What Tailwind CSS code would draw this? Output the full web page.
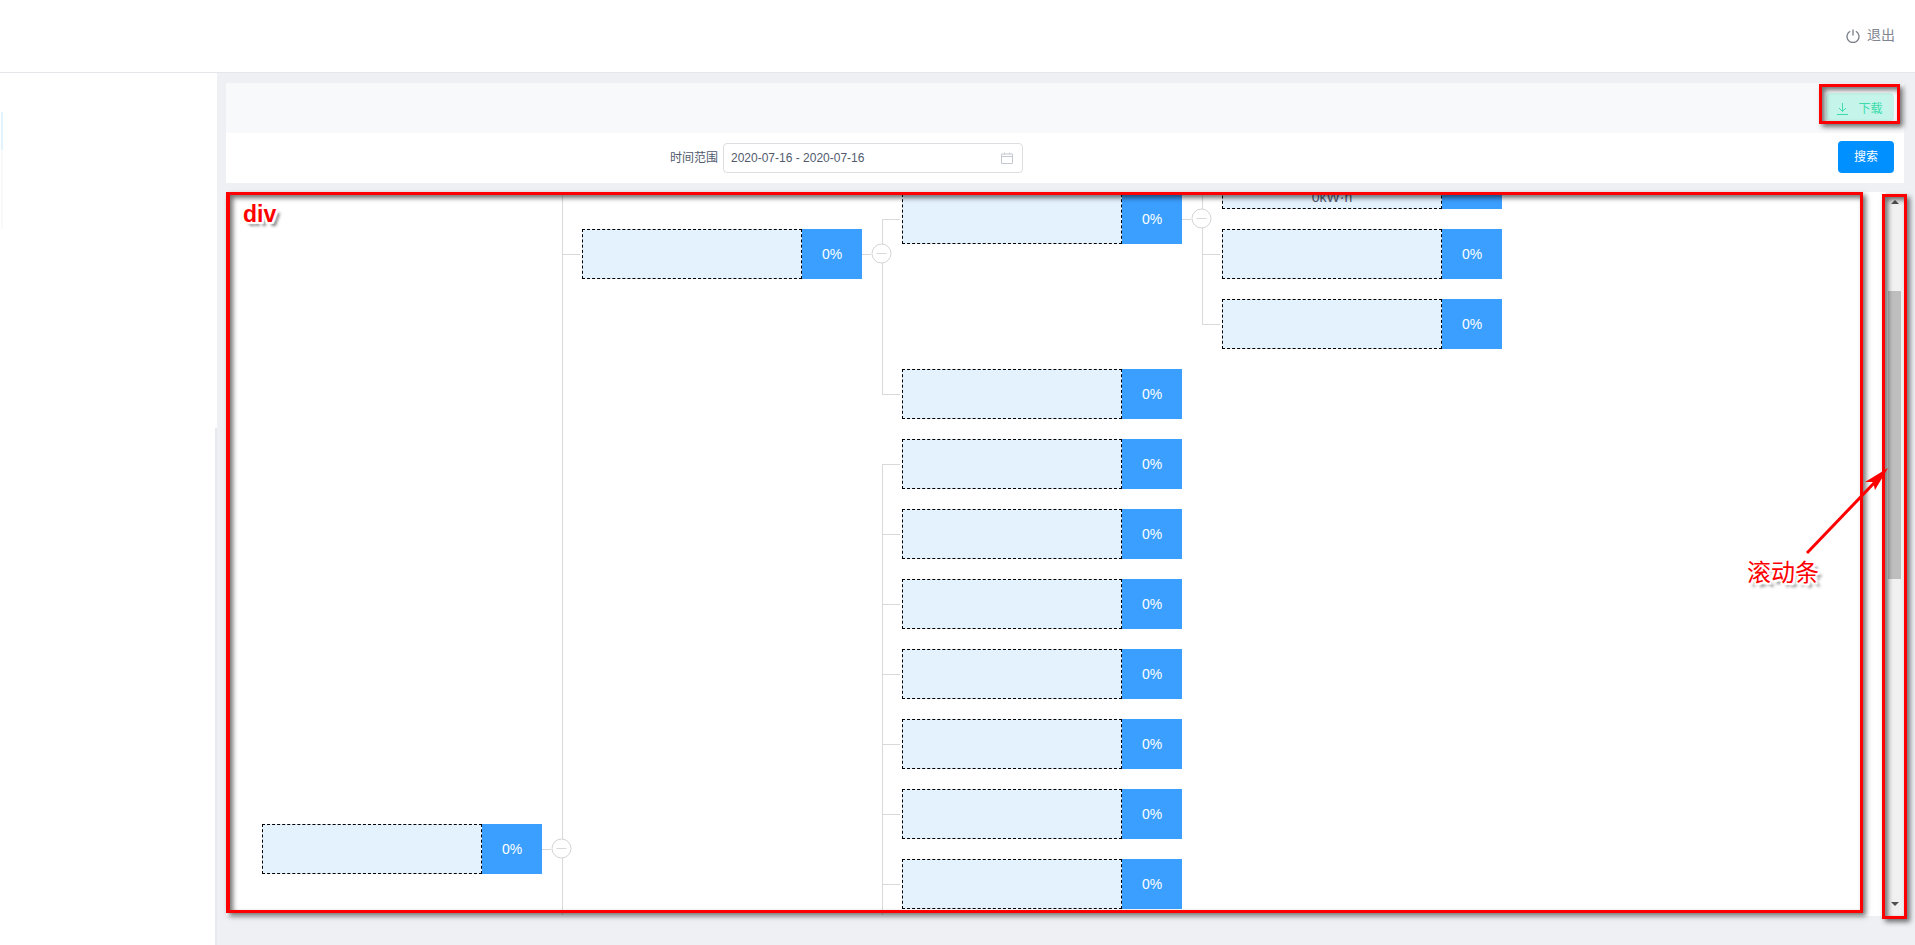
<!DOCTYPE html>
<html lang="zh-CN">

<head>
    <meta charset="UTF-8">
    <title>Report</title>
    <script src="https://cdn.jsdelivr.net/npm/@tailwindcss/browser@4"></script>
</head>

<body class="relative h-[945px] overflow-hidden bg-[#eef0f4] font-['Liberation_Sans','Noto_Sans_CJK_SC',sans-serif]">
    <!-- top bar -->
    <header class="h-[73px] bg-white border-b border-[#e4e6ea] flex items-center justify-end pr-[20px] pb-[1px]">
        <svg class="w-[14px] h-[14px] mr-[7px]" viewBox="0 0 14 14" fill="none" stroke="#777c85" stroke-width="1.3">
            <path d="M4.2 2.2a6 6 0 1 0 5.6 0" />
            <path d="M7 .5v6" />
        </svg>
        <span class="text-[14px] text-[#808691]">退出</span>
    </header>

    <div class="flex h-[872px]">
        <!-- sidebar -->
        <aside class="w-[217px] bg-[#e6e9ef] flex flex-col">
            <div class="h-[355px] bg-white pt-[39px] pl-[1px]">
                <div class="w-[2px] h-[38px] bg-[#e3f3fd]"></div>
                <div class="w-[2px] h-[79px] bg-[#f8f9fb]"></div>
            </div>
            <div class="flex-1 w-[215px] bg-white"></div>
        </aside>

        <!-- main -->
        <main class="flex-1 pl-[9px] pr-[11px] pt-[10px]">
            <div class="h-[50px] bg-[#f8f9fb] flex items-start justify-end pr-[10px] pt-[10px]">
                <button class="w-[68px] h-[28px] pt-[3px] rounded bg-[#c5f5ea] text-[#3ddcaa] text-[12px] flex items-center justify-center gap-[10px]">
                    <svg class="w-[11px] h-[12px]" viewBox="0 0 11 12" fill="none" stroke="#3ddcaa" stroke-width="1">
                        <path d="M5.5 0v8M2 5l3.5 3.5L9 5M0 11.5h11" />
                    </svg>
                    下载
                </button>
            </div>
            <div class="h-[50px] bg-white flex items-center pl-[444px] pr-[10px]">
                <span class="text-[12px] text-[#515a6e] w-[53px]">时间范围</span>
                <div class="w-[300px] h-[30px] border border-[#dcdee2] rounded flex items-center justify-between pl-[7px] pr-[9px]">
                    <span class="text-[12px] text-[#515a6e]">2020-07-16 - 2020-07-16</span>
                    <svg class="w-[12px] h-[12px]" viewBox="0 0 12 12" fill="none" stroke="#c5c8ce" stroke-width="1">
                        <path d="M.5 2h11v9.5H.5zM.5 4.5h11M3.5 .5v2M8.5 .5v2" />
                    </svg>
                </div>
                <button class="ml-auto mb-[2px] w-[56px] h-[32px] rounded bg-[#0090ff] text-white text-[12px]">搜索</button>
            </div>

            <div class="mt-[9px] h-[724px] bg-white flex">
                <!-- tree -->
                <div class="relative flex-1 overflow-hidden">
                    <svg class="absolute left-0 top-0 w-full h-full" fill="none" stroke="#d9d9d9" stroke-width="1">
                        <path d="M336.5 0V723M336 62.5h18M316 657.5h9" />
                        <path d="M656.5 27V202.5M656 27.5h18M656 202.5h18M636 62.5h9" />
                        <path d="M656.5 272V723M656 272.5h18M656 342.5h18M656 412.5h18M656 482.5h18M656 552.5h18M656 622.5h18M656 692.5h18" />
                        <path d="M976.5 0V132.5M976 62.5h18M976 132.5h18M956 27.5h9" />
                        <g fill="#fff" stroke="#d4d4d4">
                            <circle cx="335.5" cy="656.5" r="9.5" />
                            <circle cx="655.5" cy="61.5" r="9.5" />
                            <circle cx="975.5" cy="26.5" r="9.5" />
                        </g>
                        <path d="M330.5 656.5h10M650.5 61.5h10M970.5 26.5h10" />
                    </svg>

                    <!-- level 1 -->
                    <div class="absolute left-[36px] top-[632px] flex w-[280px] h-[50px]">
                        <div class="w-[220px] bg-[#e4f2fe] border border-dashed border-black"></div>
                        <div class="flex-1 bg-[#3a9fff] text-white text-[14px] flex items-center justify-center">0%</div>
                    </div>

                    <!-- level 2 -->
                    <div class="absolute left-[356px] top-[37px] flex w-[280px] h-[50px]">
                        <div class="w-[220px] bg-[#e4f2fe] border border-dashed border-black"></div>
                        <div class="flex-1 bg-[#3a9fff] text-white text-[14px] flex items-center justify-center">0%</div>
                    </div>

                    <!-- level 3 -->
                    <div class="absolute left-[676px] top-[2px] flex w-[280px] h-[50px]">
                        <div class="w-[220px] bg-[#e4f2fe] border border-dashed border-black"></div>
                        <div class="flex-1 bg-[#3a9fff] text-white text-[14px] flex items-center justify-center">0%</div>
                    </div>
                    <div class="absolute left-[676px] top-[177px] flex w-[280px] h-[50px]">
                        <div class="w-[220px] bg-[#e4f2fe] border border-dashed border-black"></div>
                        <div class="flex-1 bg-[#3a9fff] text-white text-[14px] flex items-center justify-center">0%</div>
                    </div>
                    <div class="absolute left-[676px] top-[247px] flex w-[280px] h-[50px]">
                        <div class="w-[220px] bg-[#e4f2fe] border border-dashed border-black"></div>
                        <div class="flex-1 bg-[#3a9fff] text-white text-[14px] flex items-center justify-center">0%</div>
                    </div>
                    <div class="absolute left-[676px] top-[317px] flex w-[280px] h-[50px]">
                        <div class="w-[220px] bg-[#e4f2fe] border border-dashed border-black"></div>
                        <div class="flex-1 bg-[#3a9fff] text-white text-[14px] flex items-center justify-center">0%</div>
                    </div>
                    <div class="absolute left-[676px] top-[387px] flex w-[280px] h-[50px]">
                        <div class="w-[220px] bg-[#e4f2fe] border border-dashed border-black"></div>
                        <div class="flex-1 bg-[#3a9fff] text-white text-[14px] flex items-center justify-center">0%</div>
                    </div>
                    <div class="absolute left-[676px] top-[457px] flex w-[280px] h-[50px]">
                        <div class="w-[220px] bg-[#e4f2fe] border border-dashed border-black"></div>
                        <div class="flex-1 bg-[#3a9fff] text-white text-[14px] flex items-center justify-center">0%</div>
                    </div>
                    <div class="absolute left-[676px] top-[527px] flex w-[280px] h-[50px]">
                        <div class="w-[220px] bg-[#e4f2fe] border border-dashed border-black"></div>
                        <div class="flex-1 bg-[#3a9fff] text-white text-[14px] flex items-center justify-center">0%</div>
                    </div>
                    <div class="absolute left-[676px] top-[597px] flex w-[280px] h-[50px]">
                        <div class="w-[220px] bg-[#e4f2fe] border border-dashed border-black"></div>
                        <div class="flex-1 bg-[#3a9fff] text-white text-[14px] flex items-center justify-center">0%</div>
                    </div>
                    <div class="absolute left-[676px] top-[667px] flex w-[280px] h-[50px]">
                        <div class="w-[220px] bg-[#e4f2fe] border border-dashed border-black"></div>
                        <div class="flex-1 bg-[#3a9fff] text-white text-[14px] flex items-center justify-center">0%</div>
                    </div>

                    <!-- level 4 -->
                    <div class="absolute left-[996px] top-[-33px] flex w-[280px] h-[50px]">
                        <div class="w-[220px] bg-[#e4f2fe] border border-dashed border-black flex items-end justify-center text-[14px] leading-[22px] text-[#515a6e]">0kW·h</div>
                        <div class="flex-1 bg-[#3a9fff] text-white text-[14px] flex items-center justify-center">0%</div>
                    </div>
                    <div class="absolute left-[996px] top-[37px] flex w-[280px] h-[50px]">
                        <div class="w-[220px] bg-[#e4f2fe] border border-dashed border-black"></div>
                        <div class="flex-1 bg-[#3a9fff] text-white text-[14px] flex items-center justify-center">0%</div>
                    </div>
                    <div class="absolute left-[996px] top-[107px] flex w-[280px] h-[50px]">
                        <div class="w-[220px] bg-[#e4f2fe] border border-dashed border-black"></div>
                        <div class="flex-1 bg-[#3a9fff] text-white text-[14px] flex items-center justify-center">0%</div>
                    </div>
                </div>

                <!-- scrollbar -->
                <div class="w-[18px] bg-[#f1f1f1] flex flex-col items-start pl-[2px]">
                    <div class="mt-[8px] ml-[3px] w-0 h-0 border-x-[4px] border-x-transparent border-b-[4px] border-b-[#505050]"></div>
                    <div class="mt-[87px] w-[13px] h-[288px] bg-[#bebebe]"></div>
                    <div class="mt-[323px] ml-[3px] w-0 h-0 border-x-[4px] border-x-transparent border-t-[4px] border-t-[#505050]"></div>
                </div>
            </div>
        </main>
    </div>

    <!-- annotations drawn over the screenshot -->
    <div class="absolute left-[226px] top-[192px] w-[1637px] h-[721px] border-[3px] border-l-4 border-[#f00] shadow-[3px_3px_5px_rgba(0,0,0,0.55),inset_3px_3px_5px_rgba(0,0,0,0.55)]"></div>
    <div class="absolute left-[1882px] top-[194px] w-[25px] h-[725px] border-[3px] border-[#f00] shadow-[3px_3px_5px_rgba(0,0,0,0.55),inset_3px_3px_5px_rgba(0,0,0,0.55)]"></div>
    <div class="absolute left-[1819px] top-[84px] w-[81px] h-[40px] border-[3px] border-[#f00] shadow-[3px_3px_5px_rgba(0,0,0,0.55),inset_3px_3px_5px_rgba(0,0,0,0.55)]"></div>

    <span class="absolute left-[243px] top-[200px] text-[23px] leading-[28px] font-bold text-[#f00] [text-shadow:-2px_0_1px_#fff,2px_0_1px_#fff,0_-2px_1px_#fff,0_2px_1px_#fff,-2px_-2px_1px_#fff,2px_2px_1px_#fff,-2px_2px_1px_#fff,2px_-2px_1px_#fff,4px_4px_3px_rgba(0,0,0,0.5)]">div</span>
    <span class="absolute left-[1747px] top-[556px] text-[24px] leading-[30px] text-[#f00] [text-shadow:-2px_0_1px_#fff,2px_0_1px_#fff,0_-2px_1px_#fff,0_2px_1px_#fff,-2px_-2px_1px_#fff,2px_2px_1px_#fff,-2px_2px_1px_#fff,2px_-2px_1px_#fff,4px_4px_3px_rgba(0,0,0,0.5)] font-['Noto_Sans_CJK_SC',sans-serif]">滚动条</span>

    <svg class="absolute left-[1800px] top-[460px] w-[95px] h-[100px]" viewBox="0 0 95 100">
        <path d="M7 93L75 22" stroke="#f00" stroke-width="3" />
        <path d="M88 8L65 22L73 22L75 30z" fill="#f00" />
    </svg>
</body>

</html>
